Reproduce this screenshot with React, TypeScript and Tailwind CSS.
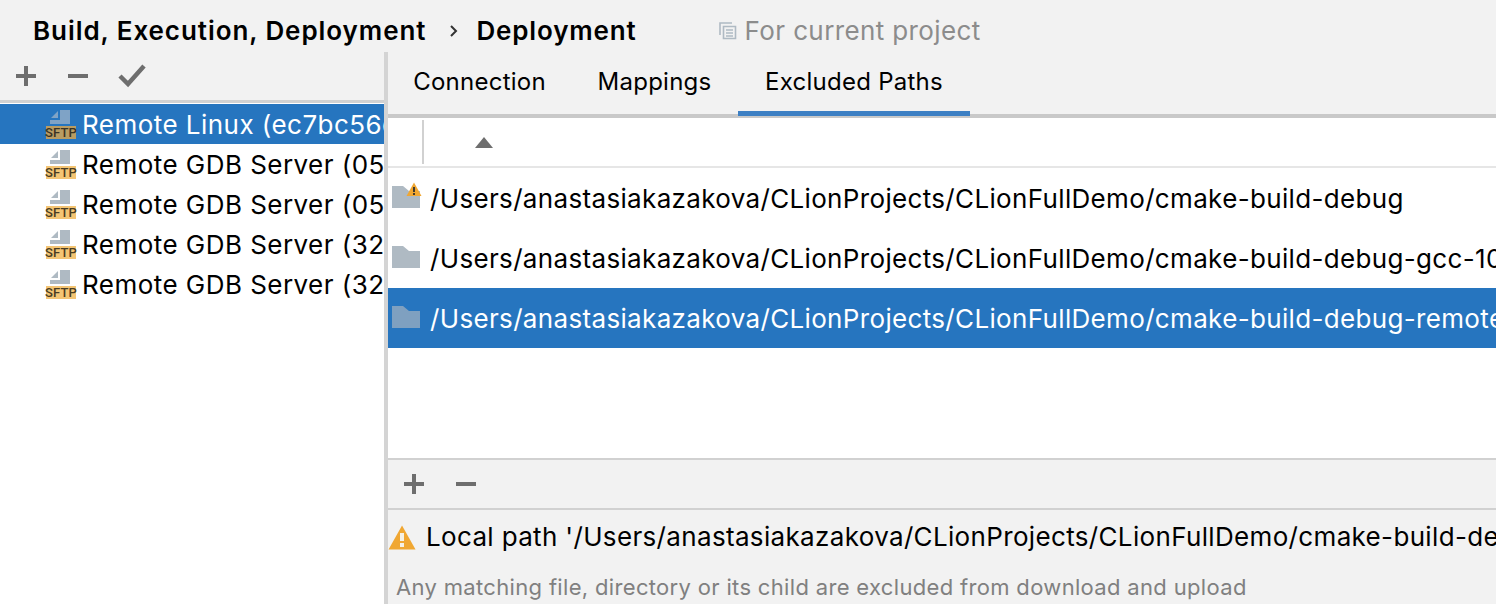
const FONT = "font-['Inter','Liberation_Sans',sans-serif]";

function PlusIcon() {
  return (
    <svg width="20" height="20" viewBox="0 0 20 20" className="shrink-0">
      <path d="M8 0h4v8h8v4h-8v8H8v-8H0V8h8z" fill="#6e6e6e" />
    </svg>
  );
}

function MinusIcon() {
  return (
    <svg width="20" height="20" viewBox="0 0 20 20" className="shrink-0">
      <rect x="0" y="8" width="20" height="4" fill="#6e6e6e" />
    </svg>
  );
}

function SftpIcon({ selected }: { selected?: boolean }) {
  const sheet = selected ? "#7fa3c6" : "#afbac3";
  return (
    <div className="relative h-[32px] w-[32px] shrink-0">
      <svg width="32" height="32" viewBox="0 0 32 32" className="block">
        <path d="M14 2h10v14H4v-4h10z" fill={sheet} />
        <path d="M12 3v7H5z" fill={sheet} />
      </svg>
      <div
        className={`absolute bottom-[1px] left-0 flex h-[13px] w-[30px] items-center justify-center font-['Roboto',sans-serif] text-[13px] font-medium leading-none tracking-[0.2px] ${
          selected ? "bg-[#b99c62] text-[#3a3324]" : "bg-[#f4c574] text-[#4a3c22]"
        }`}
      >
        SFTP
      </div>
    </div>
  );
}

function FolderIcon({ warn, selected }: { warn?: boolean; selected?: boolean }) {
  const fill = selected ? "#7fa0c0" : "#afbac3";
  return (
    <div className="relative mb-[2px] h-[22px] w-[28px] shrink-0">
      <svg width="28" height="22" viewBox="0 0 28 22" className="block">
        <path d="M0 0h11l6 5h11v17H0z" fill={fill} />
      </svg>
      {warn && (
        <svg width="16" height="15" viewBox="0 0 16 15" className="absolute left-[14px] top-[-4px]">
          <path d="M8 0.500 15.500 14H0.500z" fill="#f0a732" />
          <rect x="7" y="5" width="2" height="5" fill="#3f3a30" />
          <rect x="7" y="11" width="2" height="2" fill="#3f3a30" />
        </svg>
      )}
    </div>
  );
}

function ServerRow({ label, selected }: { label: string; selected?: boolean }) {
  return (
    <div className={`flex h-[40px] items-center overflow-hidden whitespace-nowrap pl-[46px] tracking-[0.46px] ${selected ? "bg-[#2675bf] text-white" : "text-black"}`}>
      <SftpIcon selected={selected} />
      <span className="ml-[4px] pt-[1px]">{label}</span>
    </div>
  );
}

function PathRow({ path, warn, selected }: { path: string; warn?: boolean; selected?: boolean }) {
  return (
    <div className={`flex h-[60px] items-center overflow-hidden whitespace-nowrap pl-[4px] ${selected ? "bg-[#2675bf] text-white" : "text-black"}`}>
      <FolderIcon warn={warn} selected={selected} />
      <span className="ml-[10px] pt-[1px] tracking-[0.34px]">{path}</span>
    </div>
  );
}

export default function App() {
  return (
    <div className={`${FONT} flex h-[604px] w-[1496px] flex-col overflow-hidden bg-[#f2f2f2] text-[26px] leading-[30px] tracking-[0.34px] text-black`}>
      <div className="flex h-[52px] shrink-0 items-center whitespace-nowrap pl-[33px] pt-[10px]">
        <span className="font-semibold tracking-[0.93px]">Build, Execution, Deployment</span>
        <svg width="10" height="14" viewBox="0 0 10 14" className="ml-[23px]">
          <path d="M2 2l5 5-5 5" fill="none" stroke="#333" strokeWidth="2" />
        </svg>
        <span className="ml-[17px] font-semibold tracking-[0.85px]">Deployment</span>
        <svg width="18" height="18" viewBox="0 0 18 18" className="ml-[82px]">
          <path d="M1 13V1h12M4.500 4.500h12v12h-12z" fill="none" stroke="#afbac3" strokeWidth="1.600" />
          <path d="M7 8h7M7 11h7M7 14h7" stroke="#afbac3" strokeWidth="1.500" />
        </svg>
        <span className="ml-[8px] tracking-[0.38px] text-[#8c8c8c]">For current project</span>
      </div>

      <div className="flex min-h-0 flex-1">
        <div className="w-[384px] shrink-0">
          <div className="flex h-[48px] items-center gap-[32px] pl-[16px]">
            <PlusIcon />
            <MinusIcon />
            <svg width="28" height="24" viewBox="0 0 28 24" className="ml-[-2px]">
              <path d="M2 12l8 8L26 2" fill="none" stroke="#6e6e6e" strokeWidth="4.500" />
            </svg>
          </div>
          <div className="h-[556px] border-t-[3px] border-[#d1d1d1] bg-white pt-[1px]">
            <ServerRow label="Remote Linux (ec7bc56d)" selected />
            <ServerRow label="Remote GDB Server (05" />
            <ServerRow label="Remote GDB Server (05" />
            <ServerRow label="Remote GDB Server (32" />
            <ServerRow label="Remote GDB Server (32" />
          </div>
        </div>

        <div className="flex min-w-0 flex-1 flex-col border-l-[4px] border-[#d4d4d4]">
          <div className="flex h-[66px] shrink-0 border-b-[4px] border-[#c9c9c9] text-[24px] tracking-[0.25px]">
            <div className="flex h-[62px] w-[183px] items-center justify-center pb-[2px]">Connection</div>
            <div className="flex h-[62px] w-[167px] items-center justify-center pb-[2px]">Mappings</div>
            <div className="flex h-[64px] w-[232px] items-center justify-center border-b-[5px] border-[#3d80c4] pt-[1px]">Excluded Paths</div>
          </div>
          <div className="flex h-[342px] shrink-0 flex-col border-b-[2px] border-[#d1d1d1] bg-white">
            <div className="flex h-[50px] shrink-0 items-center border-b-[2px] border-[#e6e6e6] pl-[34px]">
              <div className="h-[44px] w-[2px] bg-[#d1d1d1]" />
              <svg width="18" height="11" viewBox="0 0 18 11" className="ml-[51px]">
                <path d="M9 0l9 11H0z" fill="#6e6e6e" />
              </svg>
            </div>
            <PathRow warn path="/Users/anastasiakazakova/CLionProjects/CLionFullDemo/cmake-build-debug" />
            <PathRow path="/Users/anastasiakazakova/CLionProjects/CLionFullDemo/cmake-build-debug-gcc-10" />
            <PathRow selected path="/Users/anastasiakazakova/CLionProjects/CLionFullDemo/cmake-build-debug-remote-host" />
          </div>
          <div className="flex h-[50px] shrink-0 items-center gap-[32px] border-b-[2px] border-[#d1d1d1] pl-[16px]">
            <PlusIcon />
            <MinusIcon />
          </div>
          <div className="flex h-[54px] shrink-0 items-center whitespace-nowrap">
            <svg width="28" height="25" viewBox="0 0 28 25" className="shrink-0">
              <path d="M14 0.500 27.500 24.500H0.500z" fill="#f0a732" />
              <rect x="12" y="8" width="4" height="8" fill="#f5f1e6" />
              <rect x="12" y="18" width="4" height="4" fill="#f5f1e6" />
            </svg>
            <span className="ml-[10px]">Local path '/Users/anastasiakazakova/CLionProjects/CLionFullDemo/cmake-build-debug-remote-host' is excluded</span>
          </div>
          <div className="whitespace-nowrap pl-[8px] pt-[9px] text-[22px] leading-[28px] tracking-[0.33px] text-[#808080]">
            Any matching file, directory or its child are excluded from download and upload
          </div>
        </div>
      </div>
    </div>
  );
}
